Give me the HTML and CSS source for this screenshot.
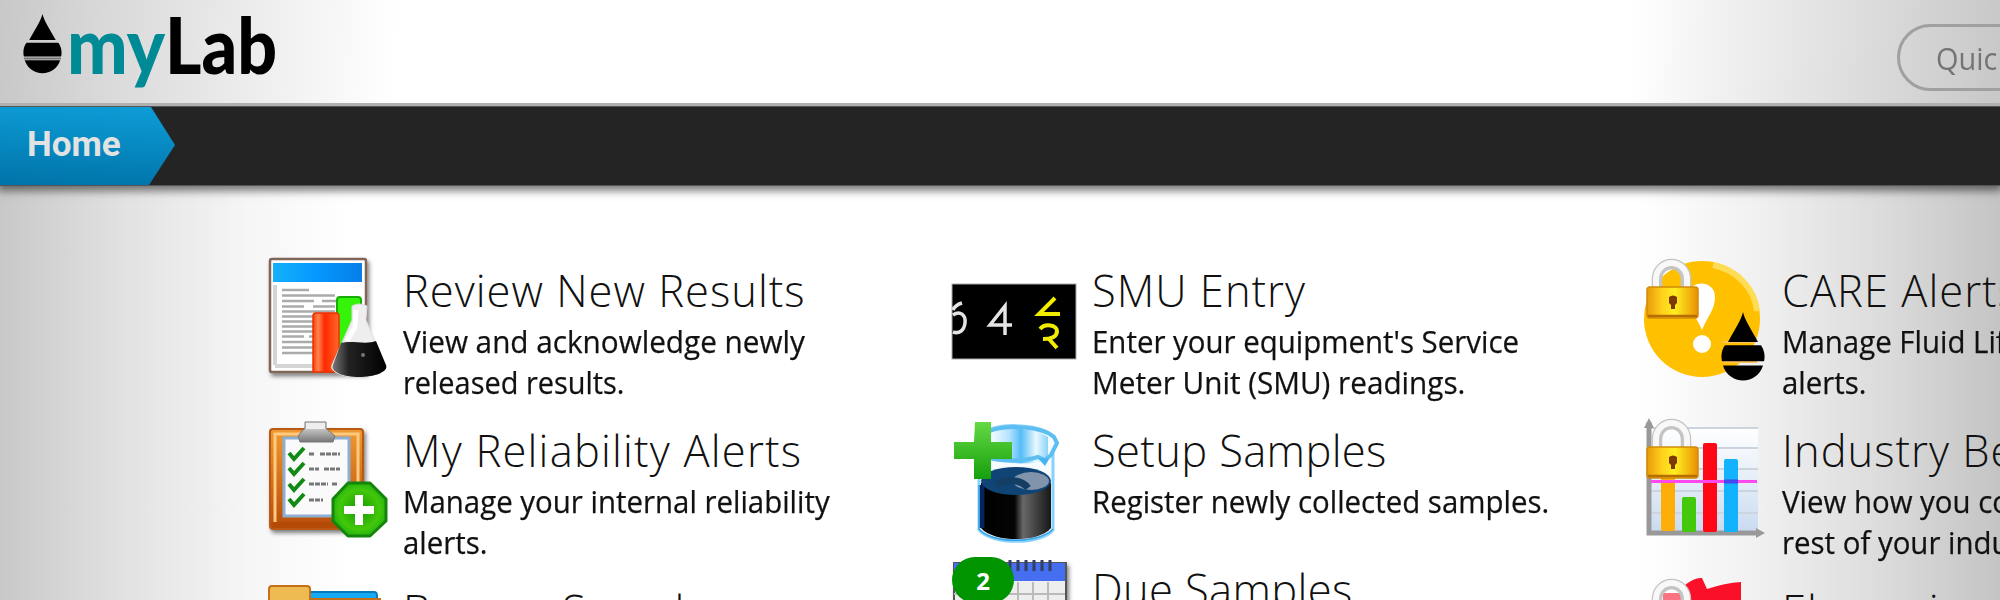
FILE: index.html
```html
<!DOCTYPE html>
<html lang="en">
<head>
<meta charset="utf-8">
<title>myLab</title>
<link rel="stylesheet" href="styles.css">
</head>
<body>
<svg class="defs" width="0" height="0">
  <defs>
    <linearGradient id="gold" x1="0" x2="1"><stop offset="0" stop-color="#e99a08"/><stop offset=".3" stop-color="#ffd21c"/><stop offset=".55" stop-color="#ffee21"/><stop offset="1" stop-color="#e99000"/></linearGradient>
    <linearGradient id="dark" x1="0" x2="1"><stop offset=".1" stop-color="#000"/><stop offset=".48" stop-color="#050505"/><stop offset=".6" stop-color="#686868"/><stop offset="1" stop-color="#171717"/></linearGradient>
    <linearGradient id="chartbg" x1="0" y1="0" x2="0" y2="1"><stop offset="0" stop-color="#fff"/><stop offset="1" stop-color="#cadbf0"/></linearGradient>
    <linearGradient id="wood" x1="0" y1="0" x2="0" y2="1"><stop offset="0" stop-color="#ef9a31"/><stop offset="1" stop-color="#b84b06"/></linearGradient>
    <linearGradient id="plusg" x1="0" y1="0" x2="0" y2="1"><stop offset="0" stop-color="#65d944"/><stop offset="1" stop-color="#159f0c"/></linearGradient>
    <linearGradient id="head" x1="0" x2="1"><stop offset="0" stop-color="#13b1fa"/><stop offset=".5" stop-color="#0597ff"/><stop offset="1" stop-color="#077ee9"/></linearGradient>
    <linearGradient id="redg" x1="0" x2="1"><stop offset="0" stop-color="#ff3c00"/><stop offset=".2" stop-color="#ff8550"/><stop offset=".45" stop-color="#ff2800"/><stop offset="1" stop-color="#ff6728"/></linearGradient>
    <linearGradient id="flaskg" x1="0" x2="1"><stop offset="0" stop-color="#777"/><stop offset=".3" stop-color="#222"/><stop offset="1" stop-color="#000"/></linearGradient>
    <linearGradient id="steel" x1="0" y1="0" x2="0" y2="1"><stop offset="0" stop-color="#eee"/><stop offset="1" stop-color="#777"/></linearGradient>
    <radialGradient id="green"><stop offset="0" stop-color="#139600"/><stop offset=".75" stop-color="#43c80a"/><stop offset="1" stop-color="#28b60f"/></radialGradient>
    <linearGradient id="glass" x1="0" x2="1"><stop offset="0" stop-color="#fff"/><stop offset=".35" stop-color="#b5e3fd"/><stop offset=".55" stop-color="#55bdf7"/><stop offset=".8" stop-color="#e9f8ff"/><stop offset="1" stop-color="#8bd4fb"/></linearGradient>
    <linearGradient id="blue" x1=".5" y1="0" x2=".4" y2="1"><stop offset="0" stop-color="#0d9bd5"/><stop offset="1" stop-color="#0075ab"/></linearGradient>
    <filter id="soft" x="-20%" y="-20%" width="150%" height="150%"><feDropShadow dx="2" dy="3" stdDeviation="2" flood-opacity=".5"/></filter>
    <g id="lock">
      <path d="M28 45V34a14.500 15 0 0 1 29 0v11" fill="none" stroke="#c4c4c4" stroke-width="10.500"/>
      <path d="M27 43V34a15.500 16 0 0 1 31 0v9" fill="none" stroke="#f8f8f8" stroke-width="6"/>
      <rect x="18" y="42" width="51" height="31" rx="3" fill="url(#gold)" stroke="#d28a08" stroke-width="1.5"/>
      <path d="M19 71h49" stroke="#b66e04" stroke-width="2.500"/>
      <path d="M40 52q4-3 8 0v6l-2 2v4h-4v-4l-2-2z" fill="#7d3903"/>
    </g>
    <g id="drop">
      <path d="M22 0C20 8 14 16 7 28h30C30 16 24 8 22 0z"/>
      <path d="M4 31h36c4 6 4 11 3 15H1c-1-4-1-10 3-15z"/>
      <path d="M2 50h40c-3 9-11 14-20 14S5 59 2 50z"/>
    </g>
  </defs>
</svg>
<div class="page">
  <header class="top">
    <svg class="brand" width="290" height="103" viewBox="0 0 290 103">
      <g class="brand-drop"><use href="#drop" transform="translate(23 14) scale(.885 .925)"/><path d="M24 58.500h37" stroke="#777" stroke-width="2"/></g>
      <text class="logo my" x="67" y="74" textLength="98" lengthAdjust="spacingAndGlyphs">my</text>
      <text class="logo" x="165" y="74" textLength="112" lengthAdjust="spacingAndGlyphs">Lab</text>
    </svg>
    <div class="search"><span>Quick Search</span></div>
  </header>
  <nav class="nav">
    <a class="crumb"><svg class="crumb-bg" width="177" height="78" viewBox="0 0 177 78"><path d="M0 0h151l24 38-26 40H0z" fill="url(#blue)"/></svg><span class="home">Home</span></a>
  </nav>
  <main class="grid">
    <section class="col">
      <article class="item">
        <svg class="icon" width="150" height="150" viewBox="0 0 150 150">
          <g filter="url(#soft)"><rect x="15" y="14" width="96" height="113" rx="2" fill="#fff" stroke="#806558" stroke-width="2.5"/></g>
          <path d="M20 120V40M20 121h90" stroke="#d5d5d5" stroke-width="4"/>
          <rect x="18" y="18" width="89" height="19" fill="url(#head)"/>
          <path d="M27 45h27M27 50.500h53M27 56h32m8 0h20M27 61.500h22m9 0h22M27 66.500h53M27 71.500h50M27 76.500h50M27 81.500h50M27 86.500h50M27 91.500h22m5 0h20M27 97h50M27 102.500h50M27 108h50" stroke="#aaa" stroke-width="2.400"/>
          <path d="M82 127V55q0-3 3-3h18q3 0 3 3v72z" fill="#35f40a" stroke="#16ae05" stroke-width="2"/>
          <path d="M58 127V71q0-3 3-3h20q3 0 3 3v56z" fill="url(#redg)" stroke="#ed3200" stroke-width="1.500"/>
          <path d="M97 61q7-4 15 0l-1 14 19 45c3 7-12 12-27 12s-29-5-26-12l20-45z" fill="#eee" stroke="#ddd"/>
          <path d="M86 98c10-3 25 2 35-2l10 24c3 7-12 12-27 12s-29-5-26-12z" fill="url(#flaskg)"/>
          <path d="M101 65l-1 17-8 14" stroke="#fff" stroke-width="5" fill="none"/><circle cx="108" cy="110" r="2" fill="#777"/>
        </svg>
        <div class="text"><h2><span>Review New Results</span></h2><p><span class="wide">View and acknowledge newly</span></p><p><span class="slim">released results.</span></p></div>
      </article>
      <article class="item">
        <svg class="icon" width="150" height="150" viewBox="0 0 150 150">
          <g filter="url(#soft)"><rect x="15" y="24" width="93" height="100" rx="3" fill="url(#wood)" stroke="#b85a16" stroke-width="2"/></g>
          <path d="M20 118V29h83v60" fill="none" stroke="#ffc980" stroke-width="3"/><path d="M18 120h88" stroke="#b34b06" stroke-width="6"/>
          <rect x="29" y="33" width="65" height="78" fill="#fafafa" stroke="#8eafd5" stroke-width="3"/>
          <path d="M43 31l4-5q2-1 3-3v-6h21v6q1 2 3 3l6 5-2 6H45z" fill="url(#steel)" stroke="#777"/><path d="M51 18h19v6H51z" fill="#eee"/>
          <g fill="none" stroke="#118914" stroke-width="4"><path d="M34 48l5 6 10-11M34 63l5 6 10-11M34 79l5 6 10-11M34 94l5 6 10-11"/></g>
          <path d="M54 49h6m5 0h20M54 64h10m5 0h16M54 79h19m4 0h6M54 95h14" stroke="#777" stroke-width="3" stroke-dasharray="5 1"/>
          <path d="M93 78h22l16 16v22l-16 15H93L78 116V94z" fill="url(#green)" stroke="#14850a" stroke-width="3" stroke-linejoin="round"/>
          <path d="M104 90v30M89 105h30" stroke="#fff" stroke-width="8"/>
        </svg>
        <div class="text"><h2 class="loose"><span>My Reliability Alerts</span></h2><p><span>Manage your internal reliability</span></p><p><span>alerts.</span></p></div>
      </article>
      <article class="item">
        <svg class="icon" width="150" height="150" viewBox="0 0 150 150"><path d="M53 27h66q3 0 3 4v90H53z" fill="#16aaf5" stroke="#0878bd" stroke-width="2"/><path d="M14 121V24q0-3 3-3h35q3 0 3 3v10h70v87z" fill="#eebb52" stroke="#c57019" stroke-width="2"/></svg>
        <div class="text"><h2><span class="tight">Browse Samples</span></h2><p>Find samples by unit.</p></div>
      </article>
    </section>
    <section class="col">
      <article class="item">
        <svg class="icon" width="150" height="150" viewBox="0 0 150 150">
          <rect x="12" y="39" width="124" height="75" fill="#000" stroke="#aaa" stroke-width="1"/>
          <g fill="none" stroke="#e4e4e4" stroke-width="3.500"><path d="M22 58q-7 2-9 7m0 5c7-5 13 0 12 8-1 8-6 11-12 9M65 90V61L50 80h22"/></g>
          <g fill="none" stroke="#f2ed00" stroke-width="4"><path d="M115 53L99 69h21M100 84c5-6 17-4 17 2 0 6-5 8-14 8m6 0l8 9"/></g>
        </svg>
        <div class="text"><h2><span>SMU Entry</span></h2><p><span>Enter your equipment's Service</span></p><p><span class="wide">Meter Unit (SMU) readings.</span></p></div>
      </article>
      <article class="item short">
        <svg class="icon" width="150" height="150" viewBox="0 0 150 150">
          <path d="M45 27c15-10 58-8 69 5l3 6-4 8v79c-12 15-61 15-74 0V58z" fill="#f5fbff" stroke="#8ad2fb" stroke-width="3"/>
          <path d="M48 27c16-6 48-4 60 5v23c-16 5-43 4-60 0z" fill="url(#glass)"/>
          <path d="M50 26c18-7 53-4 64 6l3 6-6 12-6 5-7-3c-16 5-40 4-48 1" stroke="#5dbef2" stroke-width="4" fill="none"/><path d="M98 53l7 8 4-7z" fill="#45b3ed"/>
          <path d="M41 78h70v45c-12 15-57 15-70 0z" fill="url(#dark)"/>
          <path d="M42 80v43" stroke="#08235c" stroke-width="5"/><path d="M39 80v44c12 15 61 15 74 0" stroke="#39a5e8" stroke-width="1.500" fill="none"/>
          <ellipse cx="76" cy="76" rx="35" ry="14" fill="#104474"/><ellipse cx="91" cy="76" rx="18" ry="9" fill="#8294ac"/><path d="M56 79q23-8 32 4" stroke="#153e64" stroke-width="7" fill="none"/>
          <path d="M35 17h16v20h21v17H51v20H34V54H14V37h20z" fill="url(#plusg)"/>
        </svg>
        <div class="text"><h2><span class="tight">Setup Samples</span></h2><p><span>Register newly collected samples.</span></p></div>
      </article>
      <article class="item">
        <svg class="icon" width="150" height="150" viewBox="0 0 150 150"><g filter="url(#soft)"><path d="M14 19h112v100H14z" fill="#eee" stroke="#555" stroke-width="2"/></g><path d="M14 19h111v18H14z" fill="#456ff0"/><path d="M14 50h111M78 38v70M93 38v70M108 38v70" stroke="#bbb" stroke-width="2"/><path d="M70 16v11M78 16v11M86 16v11M94 16v11M102 16v11M110 16v11" stroke="#333e63" stroke-width="3"/></svg>
        <span class="badge">2</span>
        <div class="text"><h2><span class="tight">Due Samples</span></h2><p>View samples that are due.</p></div>
      </article>
    </section>
    <section class="col">
      <article class="item">
        <svg class="icon" width="150" height="150" viewBox="0 0 150 150">
          <circle cx="73" cy="74" r="58" fill="#ffc000"/><path d="M84 20c25 5 42 25 44 46" stroke="#ffdc55" stroke-width="6" fill="none"/>
          <path d="M59 52c0-18 27-18 27 0 0 13-8 20-13 33-5-13-14-20-14-33z" fill="#fff"/><circle cx="73" cy="99" r="9" fill="#fff"/>
          <use href="#lock"/><path d="M94 97h33M94 117h34" stroke="#ffc25f" stroke-width="2"/><use href="#drop" transform="translate(92 67) scale(1 1.07)"/>
        </svg>
        <div class="text"><h2><span>CARE Alerts</span></h2><p><span>Manage Fluid Life CARE</span></p><p><span>alerts.</span></p></div>
      </article>
      <article class="item">
        <svg class="icon" width="150" height="150" viewBox="0 0 150 150">
          <rect x="21" y="23" width="108" height="104" fill="url(#chartbg)"/><path d="M21 23h108M21 43h108M21 64h108M21 86h108M21 108h108" stroke="#cbd4df" stroke-width="2"/>
          <path d="M20 17v111h110" fill="none" stroke="#999" stroke-width="5"/><path d="M15 23l5-10 5 10zM127 123l9 5-9 5z" fill="#999"/>
          <rect x="32" y="50" width="14" height="76" rx="2" fill="#ffad08"/><rect x="53" y="92" width="14" height="35" rx="2" fill="#43c80b"/><rect x="74" y="38" width="14" height="89" rx="2" fill="#ff0715"/><rect x="95" y="54" width="14" height="73" rx="2" fill="#12b2fc"/>
          <path d="M22 76.500h106" stroke="#ff49ee" stroke-width="3"/><path d="M95 76.500h14" stroke="#4a45ee" stroke-width="4"/><use href="#lock"/>
        </svg>
        <div class="text"><h2><span>Industry Benchmarks</span></h2><p><span>View how you compare to the</span></p><p><span>rest of your industry.</span></p></div>
      </article>
      <article class="item">
        <svg class="icon" width="150" height="150" viewBox="0 0 150 150"><path d="M56 20q10-8 17-7l5 11q18-6 34-7v70H50z" fill="#fb1029"/><path d="M34 28h18v30H34z" fill="#f97480"/><use href="#lock"/></svg>
        <div class="text"><h2><span>Elemaxion Query</span></h2><p>Explore your data.</p></div>
      </article>
    </section>
  </main>
</div>
</body>
</html>
```
FILE: styles.css
```css
* { box-sizing: border-box; }
body { margin: 0; width: 2000px; height: 600px; overflow: hidden; font-family: "Open Sans", sans-serif; color: #111; }
.defs { position: absolute; }
.page { height: 600px; overflow: hidden; background: linear-gradient(90deg, #c8c8c8 0, #e3e3e3 130px, #f6f6f6 250px, #fff 350px, #fff 1640px, #f0f0f0 1760px, #dcdcdc 1880px, #c4c4c4 2000px); }
.top { display: flex; justify-content: space-between; height: 106px; border-bottom: 3px solid #b0b0b0; background: linear-gradient(93deg, #c8c8c8 0, #d8d8d8 100px, #e8e8e8 220px, #f4f4f4 310px, #fff 400px, #fff 1630px, #eee 1740px, #dadada 1880px, #c8c8c8 2000px); }
.brand { flex: none; }
.logo { font-family: Lato, sans-serif; font-weight: 900; font-size: 79px; fill: #000; }
.logo.my { fill: #008a96; }
.search { width: 300px; height: 67px; margin: 24px -197px 0 0; border: 3px solid #a0a0a0; border-radius: 34px; padding-left: 36px; font-size: 31px; line-height: 63px; color: #747474; white-space: nowrap; }
.nav { position: relative; height: 80px; background: #242424; border-top: 1px solid #555; border-bottom: 1px solid #555; box-shadow: 0 3px 8px 2px rgba(0,0,0,.5); clip-path: inset(0 0 -20px 0); }
.crumb { display: grid; width: 177px; height: 78px; color: #e2e2e2; font: 700 35px/76px Roboto, sans-serif; }
.crumb-bg, .home { grid-area: 1 / 1; }
.home { padding-left: 27px; }
.grid { display: grid; grid-template-columns: 685px 689px 690px; padding: 59px 0 0 255px; width: 2400px; }
.item { position: relative; display: flex; height: 160px; }
.item.short { height: 139px; }
.icon { flex: none; width: 150px; margin-right: 2px; }
.col:first-child .icon { margin-right: -2px; }
.col:last-child .icon { margin-right: 3px; }
.text { padding-top: 16px; white-space: nowrap; }
h2 { margin: 0; font-size: 43.500px; font-weight: 300; line-height: 60px; height: 59px; letter-spacing: 1px; }
h2.loose { letter-spacing: 1.2px; }
h2 .tight { letter-spacing: .35px; }
p { margin: 0; font-size: 31.500px; line-height: 41px; height: 41px; -webkit-text-stroke: .25px #111; }
p span, .search span { display: inline-block; transform: scaleX(.934); transform-origin: 0 50%; }
p .wide { transform: scaleX(.943); }
p .slim { transform: scaleX(.918); }
.badge { position: absolute; left: 12px; top: 13px; width: 62px; height: 46px; border-radius: 23px; background: #009500; color: #fff; text-align: center; font-weight: 700; font-size: 24px; line-height: 48px; }
```
